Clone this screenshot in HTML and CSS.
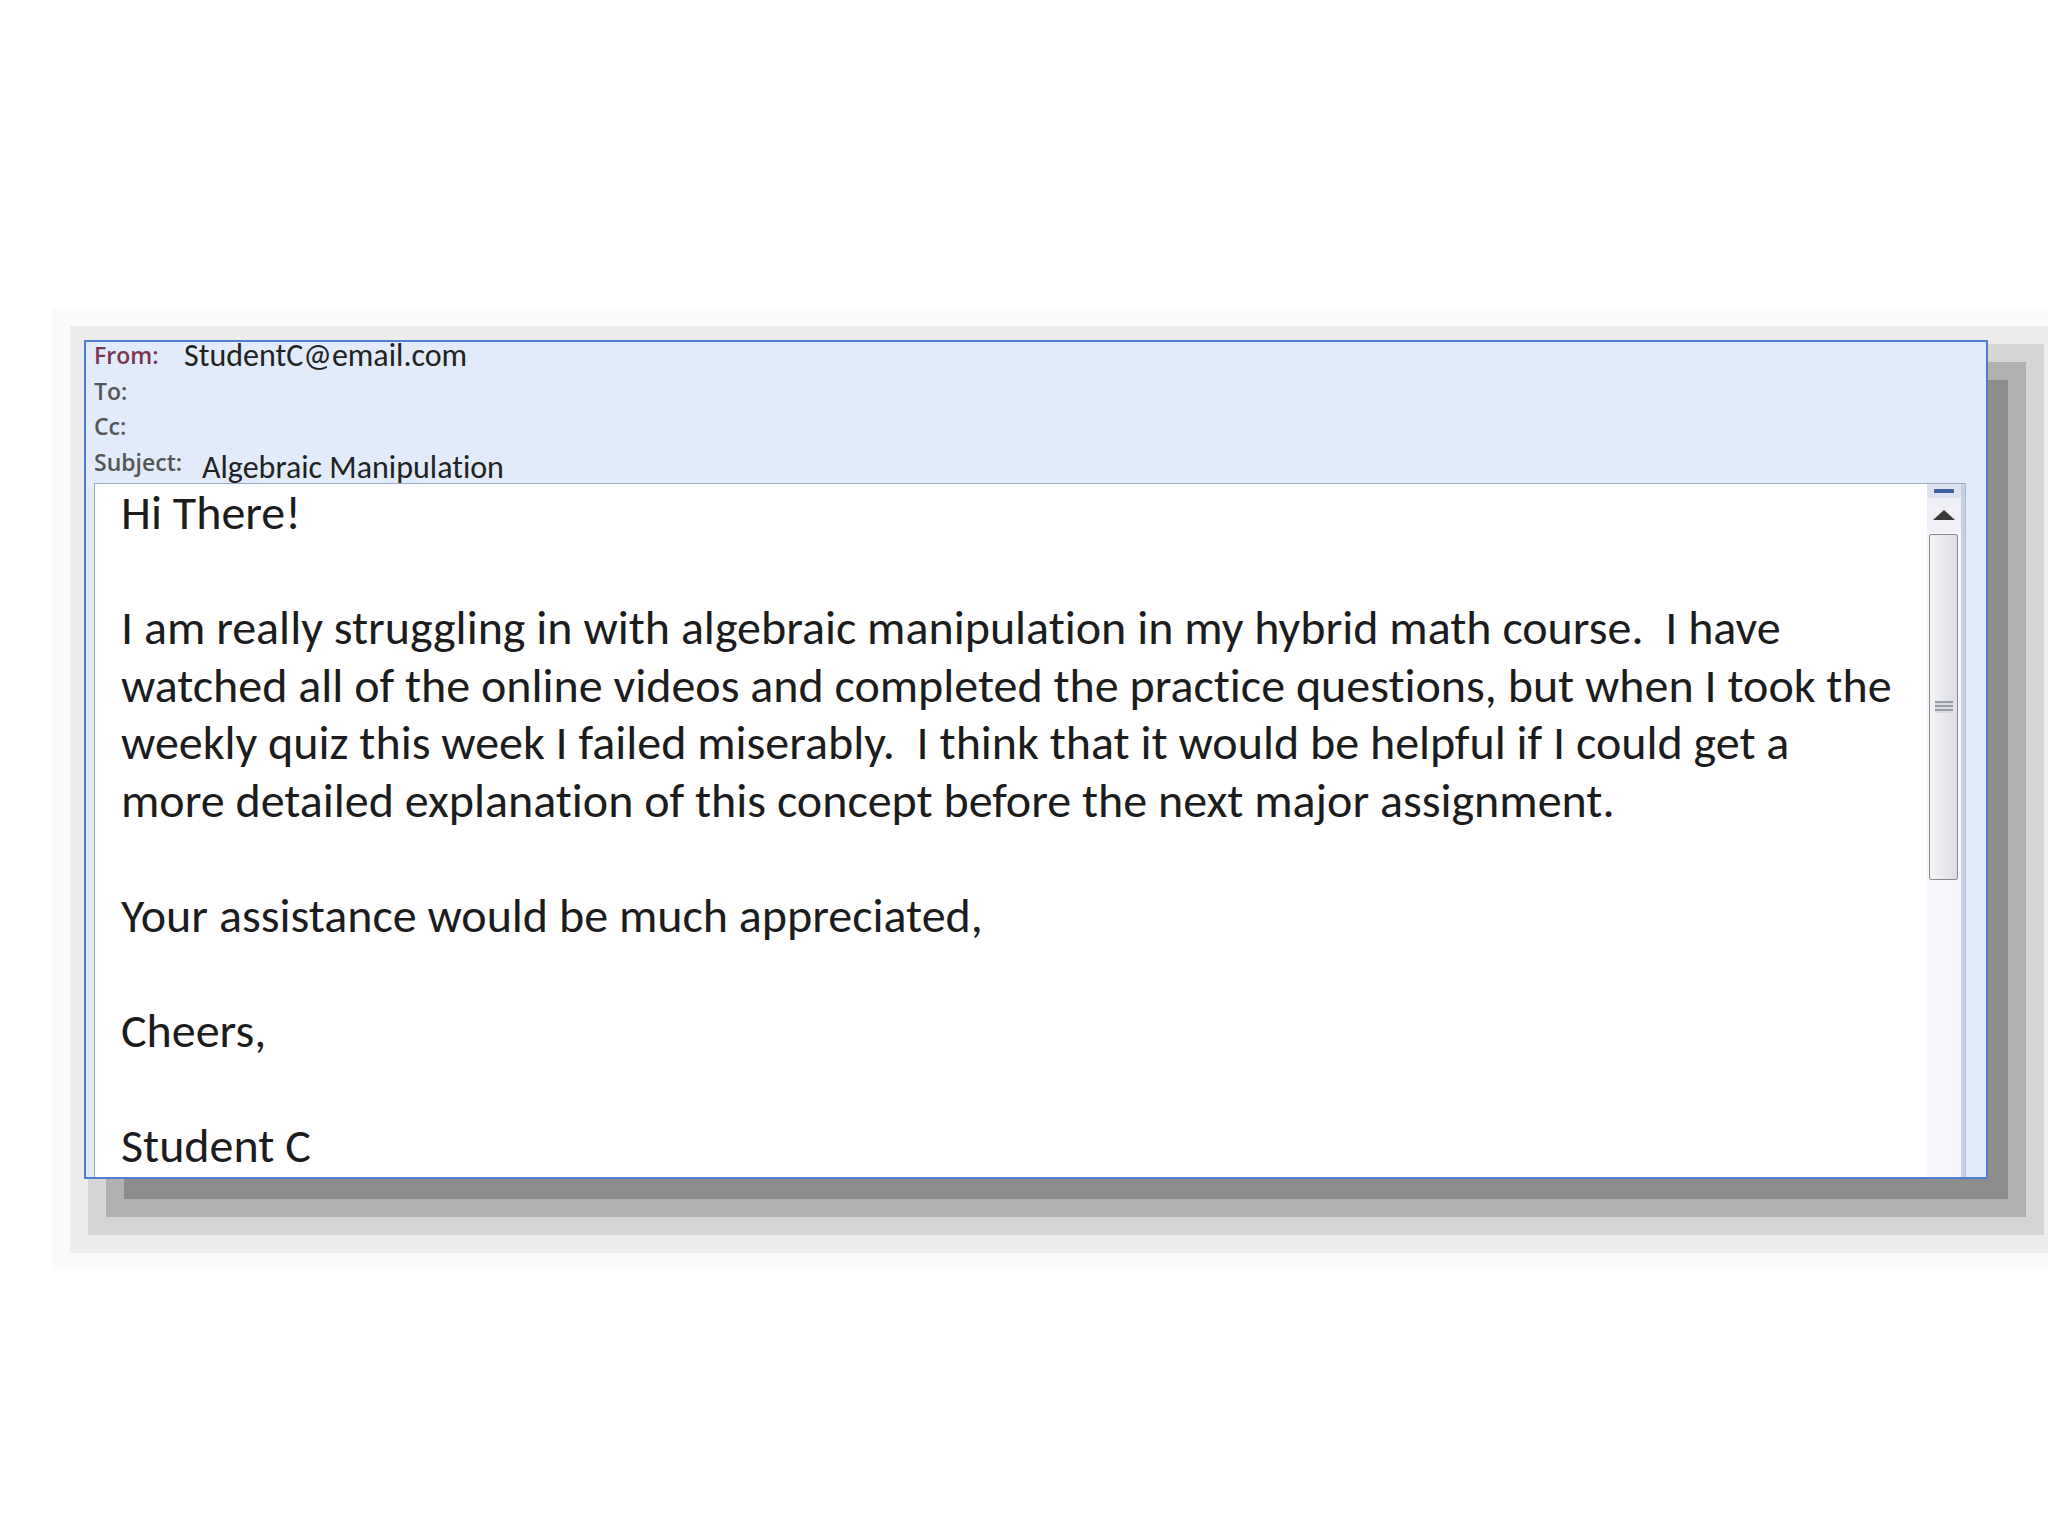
FILE: index.html
```html
<!DOCTYPE html>
<html>
<head>
<meta charset="utf-8">
<title>Email</title>
<link rel="stylesheet" href="styles.css">
</head>
<body>
<div class="page">
  <div class="window">
    <div class="header">
      <div class="row"><span class="label from l-from">From:</span><span class="value">StudentC@email.com</span></div>
      <div class="row"><span class="label">To:</span></div>
      <div class="row"><span class="label">Cc:</span></div>
      <div class="row"><span class="label l-subj">Subject:</span><span class="value v-subj">Algebraic Manipulation</span></div>
    </div>
    <div class="bodywrap">
      <div class="body">
        <div class="text">Hi There!

I am really struggling in with algebraic manipulation in my hybrid math course.  I have
watched all of the online videos and completed the practice questions, but when I took the
weekly quiz this week I failed miserably.  I think that it would be helpful if I could get a
more detailed explanation of this concept before the next major assignment.

Your assistance would be much appreciated,

Cheers,

Student C</div>
        <div class="scroll">
          <div class="sb-top"><span class="dash"></span></div>
          <div class="sb-up"><svg width="22" height="10" viewBox="0 0 22 10"><path d="M0 10 L11 0 L22 10 Z" fill="#3a3a3a"/></svg></div>
          <div class="sb-thumb"><span class="grip"></span></div>
          <div class="sb-track"></div>
        </div>
      </div>
    </div>
  </div>
</div>
</body>
</html>
```
FILE: styles.css
```css
html, body {
  margin: 0;
  background: #ffffff;
}

.page {
  box-sizing: border-box;
  min-height: 1536px;
  padding: 340px 0 0 84px;
}

.window {
  box-sizing: border-box;
  width: 1904px;
  height: 839px;
  border: 2px solid #4e7fd3;
  background: #e1ebfa;
  display: flex;
  flex-direction: column;
  box-shadow:
    30px 30px 0 -10px #8c8c8c,
    30px 30px 0 8px #b1b1b1,
    30px 30px 0 26px #d5d5d5,
    30px 30px 0 44px #ededed,
    30px 30px 0 62px #fafafa;
}

.header {
  box-sizing: border-box;
  height: 141px;
  padding: 0 0 0 8px;
  display: flex;
  flex-direction: column;
  gap: 8.5px;
}

.row {
  height: 27px;
  display: flex;
  align-items: center;
}

.label {
  font-family: "Open Sans", sans-serif;
  font-size: 23px;
  font-weight: 600;
  color: #555555;
  line-height: 27px;
}

.from {
  color: #7b3350;
}

.l-from {
  width: 90px;
}

.l-subj {
  width: 108px;
}

.value {
  font-family: Carlito, Calibri, Lato, sans-serif;
  font-size: 32px;
  color: #222222;
  line-height: 27px;
  font-variant-ligatures: none;
}

.v-subj {
  margin-top: 10px;
}

.bodywrap {
  flex: 1;
  min-height: 0;
  display: flex;
  padding: 0 20px 0 8px;
}

.body {
  flex: 1;
  display: flex;
  border: 1px solid #9aa9c6;
  border-right-color: #b4bcd6;
  border-bottom: none;
  background: #ffffff;
  overflow: hidden;
}

.text {
  flex: 1;
  padding: 0 0 0 26px;
  font-family: Carlito, Calibri, Lato, sans-serif;
  font-size: 48px;
  line-height: 57.5px;
  color: #1c1c1c;
  white-space: pre;
  overflow: hidden;
  font-variant-ligatures: none;
}

.scroll {
  box-sizing: border-box;
  width: 38px;
  display: flex;
  flex-direction: column;
  background: #f6f7fa;
  border-right: 4px solid #c9cfe2;
}

.sb-top {
  height: 14px;
  background: #dde4f0;
  display: flex;
  align-items: center;
  justify-content: center;
}

.dash {
  width: 20px;
  height: 4px;
  background: #3f5f9f;
}

.sb-up {
  height: 34px;
  background: #eef0f5;
  display: flex;
  align-items: center;
  justify-content: center;
}

.sb-thumb {
  height: 344px;
  margin: 2px 3px 0 2px;
  border: 1px solid #8a8a8a;
  border-radius: 2px;
  background: linear-gradient(to right, #f4f4f8, #dcdee6);
  display: flex;
  align-items: center;
  justify-content: center;
}

.grip {
  width: 18px;
  height: 12px;
  background: repeating-linear-gradient(to bottom, #9a9ca4 0 2px, #d8dae0 2px 4px);
}

.sb-track {
  flex: 1;
  background: #f7f8fb;
}
```
